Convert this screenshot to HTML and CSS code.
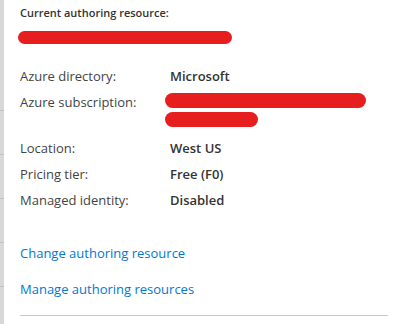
FILE: index.html
```html
<!DOCTYPE html>
<html>
<head>
<meta charset="utf-8">
<link rel="stylesheet" href="styles.css">
</head>
<body>
<div class="frame">
  <div class="edge">
    <div class="edge-top"></div>
    <div class="edge-seg"></div>
    <div class="edge-seg"></div>
    <div class="edge-seg"></div>
    <div class="edge-seg"></div>
    <div class="edge-seg"></div>
  </div>
  <div class="panel">
    <div class="title">Current authoring resource:</div>
    <div class="redact redact-name"></div>
    <div class="props">
      <div class="label">Azure directory:</div>
      <div class="value">Microsoft</div>
      <div class="label">Azure subscription:</div>
      <div class="value value-redacted">
        <div class="redact redact-sub1"></div>
        <div class="redact redact-sub2"></div>
      </div>
      <div class="label">Location:</div>
      <div class="value">West US</div>
      <div class="label">Pricing tier:</div>
      <div class="value">Free (F0)</div>
      <div class="label">Managed identity:</div>
      <div class="value">Disabled</div>
    </div>
    <div class="links">
      <a class="link" href="#">Change authoring resource</a>
      <a class="link" href="#">Manage authoring resources</a>
    </div>
    <div class="divider"></div>
  </div>
</div>
</body>
</html>
```
FILE: styles.css
```css
html, body {
  margin: 0;
  padding: 0;
  background: #ffffff;
}
body {
  font-family: "Open Sans", "Noto Sans", sans-serif;
  color: #333333;
  width: 394px;
  height: 324px;
  overflow: hidden;
}
.frame {
  display: flex;
  height: 324px;
}
.edge {
  width: 4px;
  flex: none;
  background: #d8d8d8;
  display: flex;
  flex-direction: column;
}
.edge-top {
  height: 110px;
  flex: none;
}
.edge-seg {
  height: 43px;
  flex: none;
  border-top: 1px solid #c2c2c2;
}
.panel {
  flex: 1;
  padding: 5px 6px 0 16px;
  display: flex;
  flex-direction: column;
}
.title {
  font-size: 11px;
  line-height: 16px;
  font-weight: 600;
  color: #333333;
}
.redact {
  background: #e61e1e;
  border-radius: 8px;
}
.redact-name {
  width: 214px;
  height: 13px;
  margin: 10px 0 0 -2px;
}
.props {
  margin-top: 22px;
  display: grid;
  grid-template-columns: 150px 1fr;
  row-gap: 6px;
  font-size: 13px;
  line-height: 20px;
}
.label {
  color: #444444;
}
.value {
  font-weight: 600;
  color: #333333;
}
.value-redacted {
  display: flex;
  flex-direction: column;
  gap: 4px;
  padding: 1px 0 5px 0;
  margin-left: -5px;
}
.redact-sub1 {
  width: 201px;
  height: 15px;
}
.redact-sub2 {
  width: 93px;
  height: 15px;
}
.links {
  margin-top: 33px;
  display: flex;
  flex-direction: column;
  gap: 16px;
  font-size: 13px;
  line-height: 20px;
}
.link {
  color: #0078d4;
  text-decoration: none;
}
.divider {
  margin-top: 16px;
  height: 1px;
  background: #c8c8c8;
}
```
